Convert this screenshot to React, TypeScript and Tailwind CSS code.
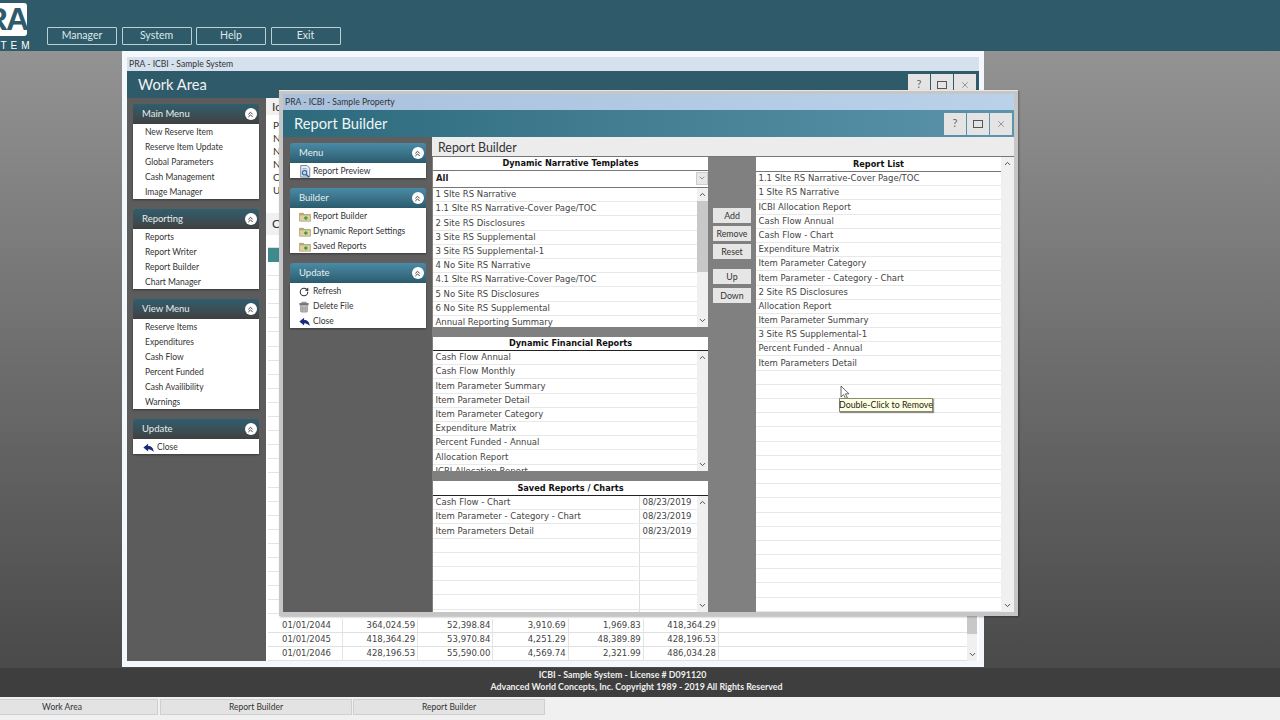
import React from "react";
import { ChevronDown, ChevronUp, ChevronsUp, RotateCw, X } from "lucide-react";

const MENU_FONT = "font-['Lato',sans-serif]";
const LIST_FONT = "font-['DejaVu_Sans',sans-serif]";

const Back = () => (
  <svg width="11" height="10" viewBox="0 0 14 12"><path d="M0.5 5.5 L6.5 0.5 V3.5 C10.5 3.5 13.5 6 13.5 11 C11.5 8.5 9.5 7.5 6.5 7.5 V10.5 Z" fill="#1c2a7a" /></svg>
);
const Folder = () => (
  <svg width="12" height="10" viewBox="0 0 14 12">
    <path d="M0.5 1.5 H5 L6 3 H13.5 V11 H0.5 Z" fill="#b8a86c" stroke="#8c8050" strokeWidth="0.6" />
    <rect x="1" y="4" width="12" height="6.6" fill="#d9cfa0" />
    <path d="M8 5 V9.5 M5.8 7.2 H10.2" stroke="#3f9a3f" strokeWidth="1.6" />
  </svg>
);
const Preview = () => (
  <svg width="12" height="13" viewBox="0 0 14 15">
    <path d="M2 0.5 H9.5 L12.5 3.5 V14 H2 Z" fill="#e8eef6" stroke="#5b7596" />
    <path d="M4 4 H9 M4 6 H10" stroke="#7d93b0" strokeWidth="0.8" />
    <circle cx="6.5" cy="9" r="2.7" fill="#bcd4ea" stroke="#2f5f92" strokeWidth="1.2" />
    <path d="M8.5 11 L11.5 14" stroke="#2f5f92" strokeWidth="1.6" />
  </svg>
);
const Trash = () => (
  <svg width="10" height="12" viewBox="0 0 12 13">
    <path d="M3.5 2 V0.8 H8.5 V2" fill="none" stroke="#666" />
    <rect x="1" y="2" width="10" height="2" fill="#8a8a8a" stroke="#555" strokeWidth="0.6" />
    <rect x="2" y="4" width="8" height="8.5" rx="1" fill="#c9c9c9" stroke="#666" strokeWidth="0.8" />
    <path d="M4 6 V11 M6 6 V11 M8 6 V11" stroke="#777" strokeWidth="0.7" />
  </svg>
);

type Item = { t: string; icon?: React.ReactNode };

function Menu({ title, items, light, first }: { title: string; items: Item[]; light?: boolean; first?: boolean }) {
  return (
    <div className={first ? "" : "mt-[10px]"}>
      <div
        className={`h-[20px] rounded-t-[3px] flex items-center justify-between pl-[9px] pr-[2.5px] text-[#e6eef0] text-[9.5px] ${MENU_FONT} ${
          light ? "bg-gradient-to-b from-[#4a8ba6] to-[#2c5c6e]" : "bg-gradient-to-b from-[#2e5e6e] to-[#404040]"
        }`}
      >
        <span>{title}</span>
        <span className="w-[12px] h-[12px] rounded-full bg-white flex items-center justify-center text-[#333]">
          <ChevronsUp size={9} strokeWidth={2.5} />
        </span>
      </div>
      <div className="bg-white shadow-[0_1px_2px_rgba(0,0,0,0.4)]">
        {items.map((it) => (
          <div
            key={it.t}
            className={`h-[15px] pt-[2px] flex items-center text-[8.5px] text-[#333] ${MENU_FONT} ${light ? "pl-[9px]" : it.icon !== undefined ? "pl-[10px]" : "pl-[12px]"}`}
          >
            {it.icon !== undefined && <span className="w-[14px] flex justify-start shrink-0">{it.icon}</span>}
            <span>{it.t}</span>
          </div>
        ))}
      </div>
    </div>
  );
}

function Scroll({ thumb, className = "" }: { thumb?: string; className?: string }) {
  return (
    <div className={`relative bg-[#f0f0f0] flex flex-col justify-between items-center py-[2px] text-[#444] shrink-0 ${className}`}>
      <ChevronUp size={9} strokeWidth={2.5} />
      {thumb && <div className={`absolute left-0 right-0 bg-[#c8c8c8] ${thumb}`} />}
      <ChevronDown size={9} strokeWidth={2.5} className="relative" />
    </div>
  );
}

const Row = ({ children }: { children?: React.ReactNode }) => (
  <div className={`h-[14.2px] shrink-0 flex items-center pl-[2.5px] border-b border-[#e8e8e8] text-[8.5px] text-[#444] whitespace-nowrap ${LIST_FONT}`}>
    {children}
  </div>
);

const Heading = ({ children, className = "" }: { children: React.ReactNode; className?: string }) => (
  <div className={`bg-white flex items-center justify-center font-bold text-[8.2px] text-[#111] shrink-0 ${LIST_FONT} ${className}`}>{children}</div>
);

const narrative = [
  "1 SIte RS Narrative", "1.1 SIte RS Narrative-Cover Page/TOC", "2 Site RS Disclosures", "3 Site RS Supplemental",
  "3 Site RS Supplemental-1", "4 No Site RS Narrative", "4.1 SIte RS Narrative-Cover Page/TOC", "5 No Site RS Disclosures",
  "6 No Site RS Supplemental", "Annual Reporting Summary",
];
const financial = [
  "Cash Flow Annual", "Cash Flow Monthly", "Item Parameter Summary", "Item Parameter Detail", "Item Parameter Category",
  "Expenditure Matrix", "Percent Funded - Annual", "Allocation Report", "ICBI Allocation Report",
];
const saved = ["Cash Flow - Chart", "Item Parameter - Category - Chart", "Item Parameters Detail", "", "", "", "", ""];
const reportList = [
  "1.1 SIte RS Narrative-Cover Page/TOC", "1 SIte RS Narrative", "ICBI Allocation Report", "Cash Flow Annual", "Cash Flow - Chart",
  "Expenditure Matrix", "Item Parameter Category", "Item Parameter - Category - Chart", "2 Site RS Disclosures", "Allocation Report",
  "Item Parameter Summary", "3 Site RS Supplemental-1", "Percent Funded - Annual", "Item Parameters Detail",
  ...Array(17).fill(""),
];
const tableRows = [
  ["01/01/2044", "364,024.59", "52,398.84", "3,910.69", "1,969.83", "418,364.29"],
  ["01/01/2045", "418,364.29", "53,970.84", "4,251.29", "48,389.89", "428,196.53"],
  ["01/01/2046", "428,196.53", "55,590.00", "4,569.74", "2,321.99", "486,034.28"],
];
const blankRows = Array.from({ length: 26 }, (_, i) => i);

const SmallBtn = ({ t, className = "" }: { t: string; className?: string }) => (
  <div className={`w-[38px] h-[15px] bg-[#e6e6e6] flex items-center justify-center text-[8.8px] text-[#333] ${MENU_FONT} ${className}`}>{t}</div>
);

const CtlBtns = () => (
  <div className="flex gap-[1px]">
    {["?", "box", "x"].map((k) => (
      <div key={k} className="w-[22px] h-[22px] bg-[#e4e4e4] flex items-center justify-center text-[#666]">
        {k === "?" && <span className={`text-[11px] ${MENU_FONT}`}>?</span>}
        {k === "box" && <span className="w-[10px] h-[8px] border border-[#555]" />}
        {k === "x" && <X size={10} strokeWidth={1.5} />}
      </div>
    ))}
  </div>
);

function WorkArea() {
  return (
    <div className="absolute left-[122px] top-0 w-[862px] h-[616px] bg-[#f4f7fb] px-[5px] pt-[6px] pb-[6px] flex flex-col">
      <div className={`h-[14px] bg-[#d6e1ee] flex items-center pl-[2px] text-[8.6px] text-[#333] shrink-0 ${MENU_FONT}`}>PRA - ICBI - Sample System</div>
      <div className="h-[27px] bg-[#2f5a69] flex items-center justify-between pl-[11px] pr-[3px] shrink-0">
        <span className={`text-[14.7px] text-[#f0f4f5] ${MENU_FONT}`}>Work Area</span>
        <CtlBtns />
      </div>
      <div className="flex-1 flex min-h-0">
        <div className="w-[139px] bg-[#5c5c5c] pt-[6px] pl-[6px] pr-[7px] shrink-0">
          <Menu first title="Main Menu" items={["New Reserve Item", "Reserve Item Update", "Global Parameters", "Cash Management", "Image Manager"].map((t) => ({ t }))} />
          <Menu title="Reporting" items={["Reports", "Report Writer", "Report Builder", "Chart Manager"].map((t) => ({ t }))} />
          <Menu title="View Menu" items={["Reserve Items", "Expenditures", "Cash Flow", "Percent Funded", "Cash Availibility", "Warnings"].map((t) => ({ t }))} />
          <Menu title="Update" items={[{ t: "Close", icon: <Back /> }]} />
        </div>
        <div className="flex-1 min-w-0 flex flex-col bg-[#f0f0f0]">
          <div className={`h-[17px] pl-[6px] text-[12px] text-[#333] shrink-0 ${MENU_FONT}`}>Ic</div>
          <div className={`h-[98px] bg-white pl-[7px] text-[10px] text-[#333] shrink-0 flex flex-col pt-[4px] ${MENU_FONT}`}>
            {["P", "N", "N", "N", "C", "U"].map((c, i) => (
              <div key={i} className="h-[13px] leading-[13px]">{c}</div>
            ))}
          </div>
          <div className={`h-[22px] pl-[6px] flex items-center text-[12px] text-[#333] shrink-0 ${MENU_FONT}`}>C</div>
          <div className="flex-1 min-h-0 flex bg-white pl-[2px] pr-[2px]">
            <div className="flex-1 min-w-0 flex flex-col">
              <div className="h-[13px] shrink-0 border-b border-[#ddd]" />
              <div className="h-[14px] shrink-0 bg-[#3f8a8c]" />
              <div className="flex-1 min-h-0 overflow-hidden flex flex-col">
                {blankRows.map((i) => (
                  <div key={i} className="h-[14.1px] shrink-0 border-b border-[#e4e4e4]" />
                ))}
              </div>
              {tableRows.map((r) => (
                <div key={r[0]} className={`h-[14px] shrink-0 flex items-center text-[8.5px] text-[#444] border-b border-[#e0e0e0] ${LIST_FONT}`}>
                  <div className="w-[75px] pl-[14px] h-full flex items-center border-r border-[#e4e4e4]">{r[0]}</div>
                  {r.slice(1).map((v, i) => (
                    <div key={i} className="w-[75.2px] text-right pr-[2px] h-full flex items-center justify-end border-r border-[#e4e4e4]">{v}</div>
                  ))}
                </div>
              ))}
            </div>
            <Scroll className="w-[10px]" thumb="top-[355px] h-[44px]" />
          </div>
        </div>
      </div>
    </div>
  );
}

function ReportBuilder() {
  return (
    <div className="absolute left-[279px] top-[39px] w-[739px] h-[526px] bg-[#c6c6c6] border-t border-[#e8e8e8] p-[4px] pt-[3px] flex flex-col shadow-[1px_1px_2px_rgba(0,0,0,0.3)]">
      <div className={`h-[16px] bg-gradient-to-r from-[#a9c1dd] to-[#b9d2ea] flex items-center pl-[2px] text-[8.6px] text-[#333] shrink-0 ${MENU_FONT}`}>PRA - ICBI - Sample Property</div>
      <div className="h-[27px] bg-gradient-to-r from-[#2c6a7c] to-[#5b94ab] flex items-center justify-between pl-[11px] pr-[2px] shrink-0">
        <span className={`text-[14.7px] text-[#f0f4f5] ${MENU_FONT}`}>Report Builder</span>
        <CtlBtns />
      </div>
      <div className="flex-1 flex min-h-0">
        <div className="w-[149px] bg-[#5f5f5f] pt-[6px] pl-[7px] pr-[6px] shrink-0">
          <Menu first light title="Menu" items={[{ t: "Report Preview", icon: <Preview /> }]} />
          <Menu light title="Builder" items={[{ t: "Report Builder", icon: <Folder /> }, { t: "Dynamic Report Settings", icon: <Folder /> }, { t: "Saved Reports", icon: <Folder /> }]} />
          <Menu light title="Update" items={[{ t: "Refresh", icon: <RotateCw size={10} strokeWidth={2.5} className="text-[#333]" /> }, { t: "Delete File", icon: <Trash /> }, { t: "Close", icon: <Back /> }]} />
        </div>
        <div className="flex-1 min-w-0 flex flex-col bg-[#808080]">
          <div className={`h-[19px] pt-[3px] bg-[#ececec] flex items-center pl-[6px] text-[12.4px] text-[#333] shrink-0 ${MENU_FONT}`}>Report Builder</div>
          <div className="flex-1 min-h-0 flex pl-[1px] border-t border-[#777]">
            <div className="w-[275px] flex flex-col shrink-0">
              <Heading className="h-[13px]">Dynamic Narrative Templates</Heading>
              <div className="h-[18px] pb-[2px] bg-white border-t border-b border-[#777] flex items-center justify-between shrink-0">
                <span className={`pl-[3px] font-bold text-[8.5px] text-[#222] ${LIST_FONT}`}>All</span>
                <span className="w-[12px] h-[13px] bg-[#e8e8e8] border border-[#ccc] flex items-center justify-center text-[#666]"><ChevronDown size={8} /></span>
              </div>
              <div className="h-[139px] shrink-0 flex bg-white overflow-hidden">
                <div className="flex-1 min-w-0 overflow-hidden flex flex-col">{narrative.map((t) => <Row key={t}>{t}</Row>)}</div>
                <Scroll className="w-[11px]" thumb="top-[13px] h-[71px]" />
              </div>
              <div className="h-[10px] shrink-0" />
              <Heading className="h-[14px] border-b border-[#222]">Dynamic Financial Reports</Heading>
              <div className="h-[120px] shrink-0 flex bg-white overflow-hidden">
                <div className="flex-1 min-w-0 overflow-hidden flex flex-col">{financial.map((t) => <Row key={t}>{t}</Row>)}</div>
                <Scroll className="w-[11px]" />
              </div>
              <div className="h-[10px] shrink-0" />
              <Heading className="h-[15px] border-b border-[#222]">Saved Reports / Charts</Heading>
              <div className="flex-1 min-h-0 flex bg-white overflow-hidden">
                <div className="flex-1 min-w-0 overflow-hidden flex flex-col">
                  {saved.map((t, i) => (
                    <Row key={i}>
                      <span className="w-[204px] shrink-0 self-stretch flex items-center border-r border-[#ddd]">{t}</span>
                      <span className="pl-[3px]">{t ? "08/23/2019" : ""}</span>
                    </Row>
                  ))}
                  <div className="flex-1"><div className="w-[206.5px] h-full border-r border-[#ddd]" /></div>
                </div>
                <Scroll className="w-[11px]" />
              </div>
            </div>
            <div className="w-[48px] shrink-0 flex flex-col items-center pt-[51px]">
              <SmallBtn t="Add" />
              <SmallBtn t="Remove" className="mt-[3px]" />
              <SmallBtn t="Reset" className="mt-[3px]" />
              <SmallBtn t="Up" className="mt-[10px]" />
              <SmallBtn t="Down" className="mt-[4px]" />
            </div>
            <div className="w-[245px] shrink-0 flex flex-col overflow-hidden bg-white">
              <Heading className="h-[15px] border-b border-[#777]">Report List</Heading>
              <div className="flex-1 min-h-0 overflow-hidden flex flex-col">
                {reportList.map((t, i) => <Row key={i}>{t}</Row>)}
              </div>
            </div>
            <Scroll className="w-[13px]" />
          </div>
        </div>
      </div>
    </div>
  );
}

export default function App() {
  return (
    <div className="relative w-[1280px] h-[720px] overflow-hidden flex flex-col bg-[#444]">
      <div className="h-[51px] shrink-0 bg-[#2f5a69] relative flex items-start pl-[47px] pt-[27px] gap-[4.5px]">
        <div className="absolute left-0 top-[3px] w-[27px] h-[33px] bg-white rounded-r-[3px] overflow-hidden flex justify-end items-center">
          <span className="font-['Liberation_Sans',sans-serif] font-bold text-[32px] leading-none text-[#2f5a69] whitespace-nowrap tracking-[-2px] mt-[-1px]">RA</span>
        </div>
        <span className="absolute left-[0.5px] top-[41px] text-[10px] leading-[10px] text-white tracking-[4px] font-['Liberation_Sans',sans-serif]">TEM</span>
        {["Manager", "System", "Help", "Exit"].map((t) => (
          <div key={t} className={`w-[70px] h-[18px] border border-[#bcd0d4] rounded-[1px] flex items-center justify-center text-[10.5px] text-[#dfe8ea] ${MENU_FONT}`}>{t}</div>
        ))}
      </div>
      <div className="relative flex-1 bg-gradient-to-b from-[#939393] to-[#4a4a4a]">
        <WorkArea />
        <ReportBuilder />
        <svg className="absolute left-[840px] top-[334px]" width="12" height="15" viewBox="0 0 12 15">
          <path d="M1 1 V12 L3.6 9.6 L5.6 13.5 L7.4 12.6 L5.4 8.8 H9 Z" fill="#fff" stroke="#444" strokeWidth="0.8" />
        </svg>
        <div className={`absolute left-[839px] top-[347px] w-[94px] h-[14px] bg-[#ffffe1] border border-[#8a8a70] shadow-[1px_1px_1px_rgba(0,0,0,0.4)] flex items-center justify-center text-[8.8px] text-[#222] whitespace-nowrap ${MENU_FONT}`}>Double-Click to Remove</div>
      </div>
      <div className={`h-[29px] shrink-0 bg-[#3e3e3e] flex flex-col items-center justify-center pb-[4px] pr-[7px] text-[8.85px] leading-[12px] font-bold text-[#eee] ${MENU_FONT}`}>
        <div className="mr-[28px]">ICBI - Sample System - License # D091120</div>
        <div>Advanced World Concepts, Inc. Copyright 1989 - 2019 All Rights Reserved</div>
      </div>
      <div className={`h-[23px] shrink-0 bg-[#f0f0f0] flex items-start pt-[2px] text-[8.5px] text-[#333] ${MENU_FONT}`}>
        <div className="w-[192px] ml-[-34px] h-[16px] bg-[#e3e3e3] border border-[#cfcfcf] flex items-center justify-center shrink-0">Work Area</div>
        <div className="w-[192px] ml-[2px] h-[16px] bg-[#e3e3e3] border border-[#cfcfcf] flex items-center justify-center shrink-0">Report Builder</div>
        <div className="w-[192px] ml-[1px] h-[16px] bg-[#e3e3e3] border border-[#cfcfcf] flex items-center justify-center shrink-0">Report Builder</div>
      </div>
    </div>
  );
}
